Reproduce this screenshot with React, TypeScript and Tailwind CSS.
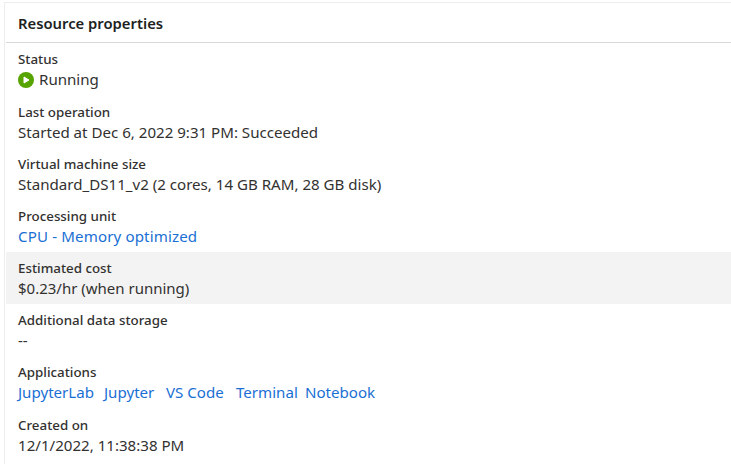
const rows = [
  { label: "Last operation", value: "Started at Dec 6, 2022 9:31 PM: Succeeded" },
  { label: "Virtual machine size", value: "Standard_DS11_v2 (2 cores, 14 GB RAM, 28 GB disk)" },
];

const apps = ["JupyterLab", "Jupyter", "VS Code", "Terminal", "Notebook"];

function Label({ children }: { children: string }) {
  return <div className="text-[13.35px] leading-[20px] font-medium text-[#323130]">{children}</div>;
}

function Row({ children, shaded }: { children: React.ReactNode; shaded?: boolean }) {
  return <div className={`h-[52px] pl-[12px] pt-[6px] ${shaded ? "bg-[#f3f3f3]" : ""}`}>{children}</div>;
}

export default function App() {
  return (
    <div className="h-[464px] w-[731px] overflow-hidden bg-white pl-[4px] pt-[2px] font-['Noto_Sans',sans-serif] text-[#323130]">
      <div className="h-full border-l border-t border-[#eeeeee] pl-px">
        <div className="flex h-[40px] items-center border-b border-[#d8d8d8] pl-[12px] pt-[2px] text-[14.8px] font-semibold text-[#201f1e]">
          Resource properties
        </div>
        <div className="pt-px">
          <div className="h-[52px] pl-[12px] pt-[5px]">
            <Label>Status</Label>
            <div className="flex items-center gap-[5px] text-[15.1px] leading-[21px]">
              <svg width="16" height="16" viewBox="0 0 16 16">
                <circle cx="8" cy="8" r="8" fill="#57a300" />
                <path d="M6 5v6l5-3z" fill="#fff" stroke="#fff" strokeLinejoin="round" />
              </svg>
              Running
            </div>
          </div>
          {rows.map((r) => (
            <Row key={r.label}>
              <Label>{r.label}</Label>
              <div className="text-[15.1px] leading-[21px]">{r.value}</div>
            </Row>
          ))}
          <Row>
            <Label>Processing unit</Label>
            <a className="block text-[15.1px] leading-[21px] tracking-[0.13px] text-[#1a6fd4]">CPU - Memory optimized</a>
          </Row>
          <Row shaded>
            <Label>Estimated cost</Label>
            <div className="text-[15px] leading-[21px]">$0.23/hr (when running)</div>
          </Row>
          <Row>
            <Label>Additional data storage</Label>
            <div className="text-[15.1px] leading-[21px]">--</div>
          </Row>
          <Row>
            <Label>Applications</Label>
            <div className="grid grid-cols-[86px_62px_70px_69px_auto] text-[15.1px] leading-[21px] text-[#1a6fd4]">
              {apps.map((a) => (
                <a key={a}>{a}</a>
              ))}
            </div>
          </Row>
          <div className="h-[52px] pl-[12px] pt-[7px]">
            <Label>Created on</Label>
            <div className="text-[15.1px] leading-[21px]">12/1/2022, 11:38:38 PM</div>
          </div>
        </div>
      </div>
    </div>
  );
}
